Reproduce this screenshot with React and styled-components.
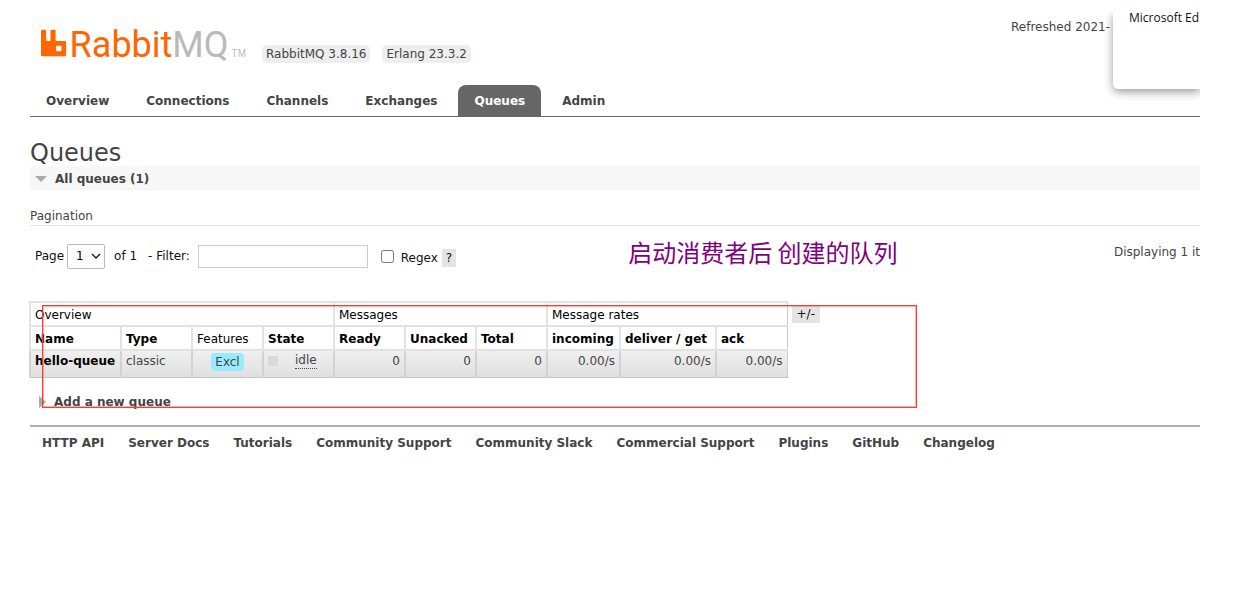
import React from 'react';
import { useState } from 'react';
import styled, { createGlobalStyle } from 'styled-components';

const tabs = ['Overview', 'Connections', 'Channels', 'Exchanges', 'Queues', 'Admin']

const links = [
  'HTTP API', 'Server Docs', 'Tutorials', 'Community Support', 'Community Slack',
  'Commercial Support', 'Plugins', 'GitHub', 'Changelog'
]

const columns = [
  { name: 'Name', width: 91, sort: true },
  { name: 'Type', width: 71, sort: true },
  { name: 'Features', width: 71 },
  { name: 'State', width: 71, sort: true },
  { name: 'Ready', width: 71, sort: true },
  { name: 'Unacked', width: 71, sort: true },
  { name: 'Total', width: 71, sort: true },
  { name: 'incoming', width: 73, sort: true },
  { name: 'deliver / get', width: 96, sort: true },
  { name: 'ack', width: 71, sort: true },
]

function Logo() {
  return (
    <LogoLink href="#/" aria-label="RabbitMQ">
      <svg width="27" height="28" viewBox="0 0 27 28">
        <path
          fill="#ff6600"
          fillRule="evenodd"
          d="M1.200 0h3q1.200 0 1.200 1.200v9.600q0 1.200 1.200 1.200h2.200q1.200 0 1.200-1.200V1.200Q10 0 11.200 0h3q1.200 0 1.200 1.200v9.600q0 1.200 1.200 1.200h8.700q1.200 0 1.200 1.200v13.600q0 1.200-1.200 1.200H1.200q-1.200 0-1.200-1.200V1.200Q0 0 1.200 0zM17 17q-1.200 0-1.200 1.200v3.300q0 1.200 1.200 1.200h3.400q1.200 0 1.200-1.200v-3.300q0-1.200-1.200-1.200z"
        />
      </svg>
      <Brand>Rabbit<span>MQ</span></Brand>
      <Trademark>TM</Trademark>
    </LogoLink>
  )
}

function App() {
  const [tab, setTab] = useState('Queues')
  const [filter, setFilter] = useState('')
  const [regex, setRegex] = useState(false)

  return (
    <Page>
      <GlobalStyle />
      <Header>
        <Logo />
        <Versions>
          <Version>RabbitMQ 3.8.16</Version>
          <Version>Erlang 23.3.2</Version>
        </Versions>
        <Refreshed>Refreshed 2021-</Refreshed>
      </Header>

      <Tabs>
        {tabs.map((t) => (
          <Tab key={t} href="#/" $active={t === tab} onClick={() => setTab(t)}>{t}</Tab>
        ))}
      </Tabs>

      <Main>
        <Title>Queues</Title>
        <Section $open>
          <Arrow $open />
          All queues (1)
        </Section>

        <Subtitle>Pagination</Subtitle>
        <Controls>
          <label htmlFor="page">Page</label>
          <PageSelect>
            <select id="page" defaultValue="1">
              <option>1</option>
            </select>
            <svg width="10" height="6" viewBox="0 0 10 6">
              <path d="M1 1l4 4 4-4" fill="none" stroke="#111" strokeWidth="1.300" />
            </svg>
          </PageSelect>
          <Total>of 1</Total>
          <FilterLabel htmlFor="filter">- Filter:</FilterLabel>
          <FilterInput id="filter" type="text" value={filter} onChange={(e) => setFilter(e.target.value)} />
          <Check id="regex" type="checkbox" checked={regex} onChange={(e) => setRegex(e.target.checked)} />
          <Regex>
            <label htmlFor="regex">Regex</label>
            <Small type="button">?</Small>
          </Regex>
          <Note>启动消费者后 创建的队列</Note>
          <Displaying>Displaying 1 it</Displaying>
        </Controls>

        <Marked>
          <TableRow>
            <Table>
              <colgroup>
                {columns.map((c) => <Col key={c.name} $width={c.width} />)}
              </colgroup>
              <thead>
                <tr>
                  <Th colSpan="4">Overview</Th>
                  <Th colSpan="3">Messages</Th>
                  <Th colSpan="3">Message rates</Th>
                </tr>
                <tr>
                  {columns.map((c) => <Th key={c.name} $bold={c.sort}>{c.name}</Th>)}
                </tr>
              </thead>
              <tbody>
                <DataRow>
                  <Td><QueueLink href="#/">hello-queue</QueueLink></Td>
                  <Td>classic</Td>
                  <Td $align="center"><Feature>Excl</Feature></Td>
                  <Td><State><Square /><abbr title="idle">idle</abbr></State></Td>
                  <Td $align="right">0</Td>
                  <Td $align="right">0</Td>
                  <Td $align="right">0</Td>
                  <Td $align="right">0.00/s</Td>
                  <Td $align="right">0.00/s</Td>
                  <Td $align="right">0.00/s</Td>
                </DataRow>
              </tbody>
            </Table>
            <Small type="button">+/-</Small>
          </TableRow>
          <Section>
            <Arrow />
            Add a new queue
          </Section>
          <Outline />
        </Marked>
      </Main>

      <Footer>
        {links.map((l) => <FooterLink key={l} href="#/">{l}</FooterLink>)}
      </Footer>

      <Popup>Microsoft Ed</Popup>
    </Page>
  );
}

export default App;

const GlobalStyle = createGlobalStyle`
body {
  margin: 0;
  background: white;
  color: #444;
  font-family: Verdana, "DejaVu Sans", sans-serif;
  font-size: 12px;
  line-height: 16px;
}
* {
  box-sizing: border-box;
}
`

const Page = styled.div`
position: relative;
overflow: hidden;
margin: 12px 45px 0 0;
padding-left: 30px;
white-space: nowrap;
`

const Header = styled.header`
display: flex;
align-items: flex-start;
height: 73px;
padding: 7px 90px 0 11px;
`

const LogoLink = styled.a`
display: flex;
align-items: baseline;
width: 205px;
margin-top: 6px;
color: #b9b9b9;
text-decoration: none;
`

const Brand = styled.span`
margin-left: 3px;
font-family: Roboto, sans-serif;
font-size: 36px;
line-height: 40px;
color: #ff6600;
span {
  color: #b9b9b9;
}
`

const Trademark = styled.span`
margin-left: 3px;
font-family: "Liberation Sans", sans-serif;
font-size: 10px;
line-height: 12px;
`

const Versions = styled.div`
display: flex;
gap: 12px;
margin: 26px 0 0 16px;
`

const Version = styled.span`
padding: 1px 4px;
border-radius: 5px;
background: #eee;
`

const Refreshed = styled.div`
margin-left: auto;
`

const Tabs = styled.nav`
display: flex;
gap: 5px;
border-bottom: 1px solid #666;
`

const Tab = styled.a`
padding: 8px 16px 7px;
border-radius: 8px 8px 0 0;
background: ${(p) => (p.$active ? '#666' : 'transparent')};
color: ${(p) => (p.$active ? 'white' : '#444')};
font-weight: bold;
text-decoration: none;
`

const Main = styled.main`
padding-top: 24px;
`

const Title = styled.h1`
margin: 0;
font-size: 24px;
line-height: 25px;
font-weight: normal;
`

const Section = styled.h2`
display: flex;
align-items: center;
gap: 8px;
height: 24px;
margin: 0;
padding: ${(p) => (p.$open ? '2px 0 0 5px' : '0 0 0 9px')};
background: ${(p) => (p.$open ? '#f7f7f7' : 'transparent')};
font-size: 12px;
`

const Arrow = styled.span`
border-style: solid;
border-color: ${(p) => (p.$open ? '#a9a9a9 transparent' : 'transparent #a9a9a9')};
border-width: ${(p) => (p.$open ? '6px 6px 0' : '6px 0 6px 7px')};
`

const Subtitle = styled.h3`
margin: 18px 0 0;
padding-bottom: 1px;
border-bottom: 1px solid #e4e4e4;
font-size: 12px;
font-weight: normal;
`

const Controls = styled.div`
display: flex;
align-items: center;
height: 60px;
padding-left: 5px;
color: #111;
`

const PageSelect = styled.div`
display: grid;
align-items: center;
margin-left: 3px;
> * {
  grid-area: 1 / 1;
}
svg {
  justify-self: end;
  margin-right: 4px;
  pointer-events: none;
}
select {
  appearance: none;
  width: 38px;
  height: 25px;
  padding: 0 8px;
  border: 1px solid #bbb;
  border-radius: 2px;
  background: white;
  font: inherit;
}
`

const Total = styled.span`
margin-left: 9px;
`

const FilterLabel = styled.label`
margin-left: 11px;
`

const FilterInput = styled.input`
width: 170px;
height: 23px;
margin-left: 8px;
border: 1px solid #ccc;
font: inherit;
`

const Check = styled.input`
width: 13px;
height: 13px;
margin: 0 0 0 13px;
`

const Regex = styled.div`
padding-top: 4px;
margin-left: 7px;
`

const Small = styled.button`
padding: 1px 4px;
margin-left: 4px;
border: 0;
background: #e4e4e4;
color: #111;
font: inherit;
`

const Note = styled.span`
margin-left: 172px;
padding-bottom: 8px;
font-family: "Noto Sans CJK SC", sans-serif;
font-size: 24px;
line-height: 32px;
color: purple;
`

const Displaying = styled.span`
margin-left: auto;
padding-bottom: 8px;
color: #444;
`

const Marked = styled.div`
position: relative;
padding: 15px 0 11px;
`

const TableRow = styled.div`
display: flex;
align-items: flex-start;
margin: 0 0 12px -1px;
> button {
  padding: 1px 5px;
  margin-top: 4px;
}
`

const Table = styled.table`
table-layout: fixed;
width: 758px;
border-collapse: collapse;
color: #111;
`

const Col = styled.col`
width: ${(p) => p.$width}px;
`

const Th = styled.th`
height: 24px;
padding: 2px 4px 0;
border: 2px solid #e2e2e2;
text-align: left;
color: black;
font-weight: ${(p) => (p.$bold ? 'bold' : 'normal')};
&:last-child {
  border-right: 1px solid #ccc;
}
`

const DataRow = styled.tr`
background: linear-gradient(#f0f0f0, #dfdfdf);
`

const Td = styled.td`
height: 27px;
padding: 2px 4px 0;
border: 2px solid #d2d2d2;
border-bottom: 1px solid #c4c4c4;
color: #444;
vertical-align: top;
text-align: ${(p) => p.$align || 'left'};
&:last-child {
  border-right: 1px solid #ccc;
}
`

const QueueLink = styled.a`
color: black;
font-weight: bold;
text-decoration: none;
`

const Feature = styled.span`
display: inline-block;
padding: 1px 4px;
border-radius: 4px;
background: #98ebff;
`

const State = styled.div`
display: flex;
align-items: center;
gap: 17px;
abbr {
  border-bottom: 1px dotted #444;
  text-decoration: none;
  line-height: 15px;
}
`

const Square = styled.span`
width: 10px;
height: 10px;
background: #d9d9d9;
`

const Outline = styled.div`
position: absolute;
top: 19px;
left: 12px;
width: 875px;
height: 103px;
border: 1px solid #ff3b30;
box-shadow: inset 0 0 0 1px rgba(255, 59, 48, 0.4);
pointer-events: none;
`

const Footer = styled.footer`
display: flex;
gap: 24px;
padding: 8px 12px;
border-top: 2px solid #b0b0b0;
`

const FooterLink = styled.a`
color: #444;
font-weight: bold;
text-decoration: none;
`

const Popup = styled.aside`
position: absolute;
top: 0;
right: 0;
width: 87px;
height: 77px;
padding-left: 16px;
overflow: hidden;
border-radius: 0 0 0 5px;
background: white;
box-shadow: 0 3px 10px rgba(0, 0, 0, 0.4);
color: #111;
font-family: "Open Sans", sans-serif;
line-height: 12px;
`
